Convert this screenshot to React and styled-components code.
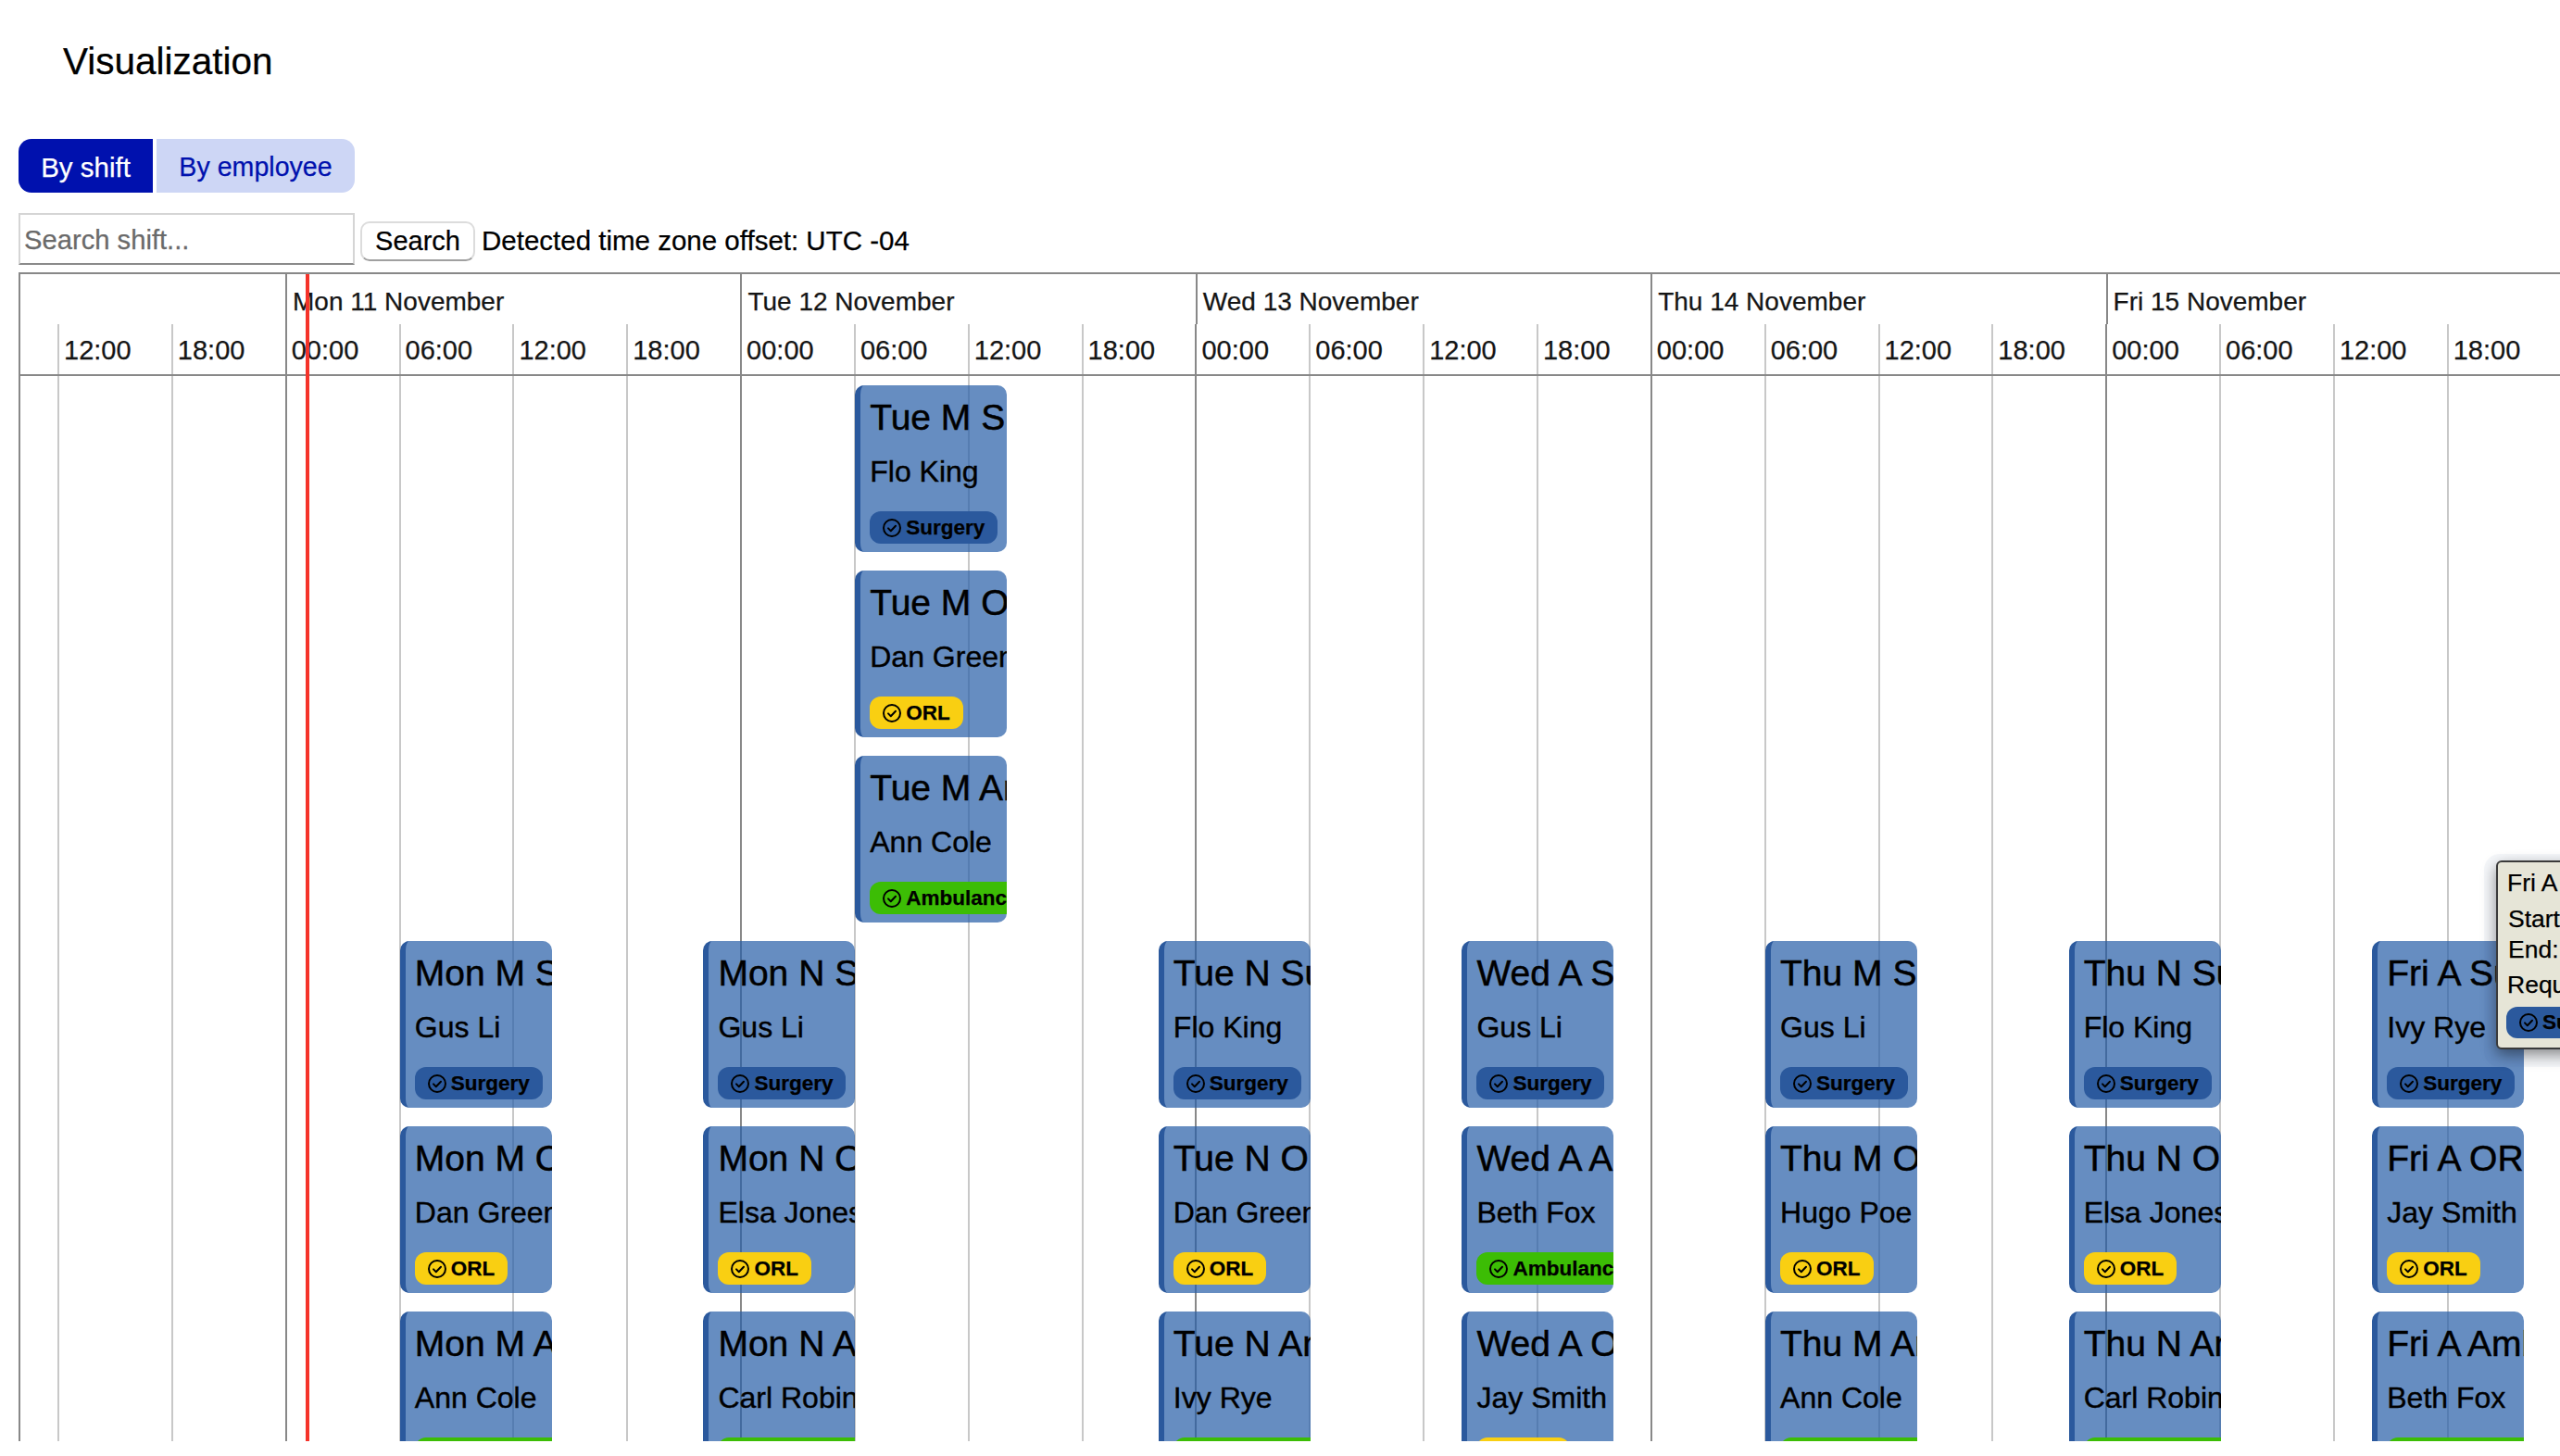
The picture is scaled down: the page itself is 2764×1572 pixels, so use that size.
import React from "react";
import styled, { createGlobalStyle } from "styled-components";

const HOUR = 20.475;
const FONT = '"Liberation Sans", Arial, sans-serif';

const GlobalStyle = createGlobalStyle`
  html, body { margin: 0; padding: 0; width: 2764px; height: 1572px; overflow: hidden; background: #fff; }
  body { font-family: ${FONT}; color: #151515; -webkit-text-stroke: 0.25px currentColor; }
  * { box-sizing: border-box; }
`;

const Page = styled.div`
  width: 2764px;
  height: 1556px;
  padding-left: 20px;
  display: flex;
  flex-direction: column;
  overflow: hidden;
`;
const Title = styled.h1`
  margin: 0;
  height: 150px;
  padding: 41px 0 0 48px;
  font-size: 40.5px;
  line-height: 50px;
  font-weight: 400;
  color: #000;
`;
const Toggle = styled.div`
  display: flex;
  gap: 4px;
  height: 58px;
`;
const ToggleButton = styled.button`
  border: 0;
  font: 400 ${(p) => (p.$active ? 29.5 : 28.6)}px ${FONT};
  padding: 3px 0 0;
  width: ${(p) => (p.$active ? 145 : 214)}px;
  background: ${(p) => (p.$active ? "#0011ae" : "#cdd6f5")};
  color: ${(p) => (p.$active ? "#fff" : "#0011ae")};
  border-radius: ${(p) => (p.$active ? "14px 0 0 14px" : "0 14px 14px 0")};
`;
const SearchRow = styled.div`
  display: flex;
  align-items: center;
  height: 56px;
  margin-top: 22px;
  font-size: 29.5px;
  color: #000;
`;
const SearchInput = styled.input`
  width: 363px;
  height: 56px;
  padding: 3px 4px 0;
  border: 2px solid #d5d5d5;
  border-bottom-color: #8a8a8a;
  font: 400 29.2px ${FONT};
  background: #fff;
  &::placeholder { color: #6a6a6a; opacity: 1; }
`;
const SearchButton = styled.button`
  margin: 4px 7px 0 6px;
  width: 124px;
  height: 43px;
  padding: 0;
  background: #fff;
  border: 2px solid #dcdcdc;
  border-bottom-color: #a0a0a0;
  border-radius: 10px;
  font: 400 29px ${FONT};
  color: #000;
`;
const OffsetText = styled.span`
  padding-top: 3px;
`;
const Timeline = styled.div`
  position: relative;
  flex: 1;
  min-height: 0;
  margin-top: 8px;
  border-left: 2px solid #888;
  border-top: 2px solid #888;
  overflow: hidden;
  display: flex;
  flex-direction: column;
`;
const DayRow = styled.div`
  display: flex;
  flex: none;
  height: 54px;
`;
const DayBlank = styled.div`
  flex: none;
  width: 286px;
`;
const DayCell = styled.div`
  flex: none;
  width: ${HOUR * 24}px;
  border-left: 2px solid #888;
  padding: 12px 0 0 6px;
  font-size: 28px;
  line-height: 36px;
  color: #151515;
`;
const HourRow = styled.div`
  display: flex;
  flex: none;
  height: 56px;
  border-bottom: 2px solid #888;
`;
const Blank = styled.div`
  flex: none;
  width: 40px;
`;
const HourCell = styled.div`
  flex: none;
  width: ${HOUR * 6}px;
  border-left: 2px solid ${(p) => (p.$major ? "#888" : "#c8c8c8")};
  padding: 10px 0 0 5px;
  font-size: 29px;
  line-height: 36px;
  color: #151515;
`;
const Body = styled.div`
  position: relative;
  flex: 1;
  min-height: 0;
`;
const GridLayer = styled.div`
  position: absolute;
  inset: 0;
  display: flex;
`;
const GridCell = styled.div`
  flex: none;
  width: ${HOUR * 6}px;
  border-left: 2px solid ${(p) => (p.$major ? "#888" : "#c8c8c8")};
`;
const NowLine = styled.div`
  position: absolute;
  left: 308px;
  top: 0;
  bottom: 0;
  width: 4px;
  background: #f5332a;
  z-index: 3;
`;
const Card = styled.div`
  position: absolute;
  width: 164px;
  height: 180px;
  background: rgba(40, 94, 167, 0.71);
  border-left: 6px solid #2b599d;
  border-radius: 10px;
  overflow: hidden;
  padding: 12px 0 0 10px;
  white-space: nowrap;
  color: #000;
`;
const CardTitle = styled.div`
  font-size: 39px;
  line-height: 46px;
  -webkit-text-stroke: 0.5px #000;
`;
const CardName = styled.div`
  margin-top: 12px;
  font-size: 32px;
  line-height: 46px;
  -webkit-text-stroke: 0.4px #000;
`;
const Badge = styled.div`
  display: inline-flex;
  align-items: center;
  gap: 5px;
  height: 35px;
  margin-top: 20px;
  padding: 0 14px;
  border-radius: 12px;
  font-size: 22.5px;
  font-weight: 700;
  background: ${(p) => p.$bg};
`;
const TipBadge = styled(Badge)`
  margin: 7px 0 0 -1px;
  height: 34px;
`;
const CheckIcon = styled.svg`
  width: 20px;
  height: 20px;
  flex: none;
`;
const Tooltip = styled.div`
  position: absolute;
  left: 2673px;
  top: 523px;
  width: 340px;
  height: 204px;
  z-index: 4;
  background: #e6e5d7;
  border: 2px solid #3a3a3a;
  border-radius: 6px;
  padding: 4px 10px;
  box-shadow: 0 6px 16px rgba(0, 0, 0, 0.45), 0 6px 0 13px rgba(60, 90, 160, 0.05);
  color: #000;
  font-size: 26.5px;
  white-space: nowrap;
`;
const TipTitle = styled.div`
  line-height: 36px;
`;
const TipTimes = styled.div`
  margin: 5px 0 5px 1px;
`;
const TipLine = styled.div`
  line-height: 33px;
`;

function Check() {
  return (
    <CheckIcon viewBox="0 0 20 20" fill="none" stroke="#000" strokeWidth="2">
      <circle cx="10" cy="10" r="9" />
      <path d="M6 10.4l2.8 2.8 5.2-5.4" strokeLinecap="round" strokeLinejoin="round" />
    </CheckIcon>
  );
}

const SKILL = {
  Surgery: "#2b599d",
  ORL: "#f9cf12",
  Ambulance: "#3cbd05",
};

const x0 = 286; // Mon 00:00, relative to the body
const days = ["Mon 11 November", "Tue 12 November", "Wed 13 November", "Thu 14 November", "Fri 15 November"];
const hours = ["00:00", "06:00", "12:00", "18:00"];

const shifts = [
  [30, 0, "Tue M Surgery", "Flo King", "Surgery"],
  [30, 1, "Tue M ORL", "Dan Green", "ORL"],
  [30, 2, "Tue M Ambulance", "Ann Cole", "Ambulance"],
  [6, 3, "Mon M Surgery", "Gus Li", "Surgery"],
  [6, 4, "Mon M ORL", "Dan Green", "ORL"],
  [6, 5, "Mon M Ambulance", "Ann Cole", "Ambulance"],
  [22, 3, "Mon N Surgery", "Gus Li", "Surgery"],
  [22, 4, "Mon N ORL", "Elsa Jones", "ORL"],
  [22, 5, "Mon N Ambulance", "Carl Robin", "Ambulance"],
  [46, 3, "Tue N Surgery", "Flo King", "Surgery"],
  [46, 4, "Tue N ORL", "Dan Green", "ORL"],
  [46, 5, "Tue N Ambulance", "Ivy Rye", "Ambulance"],
  [62, 3, "Wed A Surgery", "Gus Li", "Surgery"],
  [62, 4, "Wed A Ambulance", "Beth Fox", "Ambulance"],
  [62, 5, "Wed A ORL", "Jay Smith", "ORL"],
  [78, 3, "Thu M Surgery", "Gus Li", "Surgery"],
  [78, 4, "Thu M ORL", "Hugo Poe", "ORL"],
  [78, 5, "Thu M Ambulance", "Ann Cole", "Ambulance"],
  [94, 3, "Thu N Surgery", "Flo King", "Surgery"],
  [94, 4, "Thu N ORL", "Elsa Jones", "ORL"],
  [94, 5, "Thu N Ambulance", "Carl Robin", "Ambulance"],
  [110, 3, "Fri A Surgery", "Ivy Rye", "Surgery"],
  [110, 4, "Fri A ORL", "Jay Smith", "ORL"],
  [110, 5, "Fri A Ambulance", "Beth Fox", "Ambulance"],
];

const slots = [];
for (let d = 0; d < 5; d++) hours.forEach((h, i) => slots.push({ h, major: i === 0 }));
const leading = ["12:00", "18:00"];
const cols = [...leading.map((h) => ({ h, major: false })), ...slots];

export default function App() {
  return (
    <>
      <GlobalStyle />
      <Page>
        <Title>Visualization</Title>
        <Toggle>
          <ToggleButton $active>By shift</ToggleButton>
          <ToggleButton>By employee</ToggleButton>
        </Toggle>
        <SearchRow>
          <SearchInput placeholder="Search shift..." />
          <SearchButton>Search</SearchButton>
          <OffsetText>Detected time zone offset: UTC -04</OffsetText>
        </SearchRow>
        <Timeline>
          <DayRow>
            <DayBlank />
            {days.map((d) => (
              <DayCell key={d}>{d}</DayCell>
            ))}
          </DayRow>
          <HourRow>
            <Blank />
            {cols.map((c, i) => (
              <HourCell key={i} $major={c.major}>{c.h}</HourCell>
            ))}
          </HourRow>
          <Body>
            <GridLayer>
              <Blank />
              {cols.map((c, i) => (
                <GridCell key={i} $major={c.major} />
              ))}
            </GridLayer>
            {shifts.map(([hour, row, title, name, skill]) => (
              <Card key={title} style={{ left: x0 + 1 + hour * HOUR, top: 10 + row * 200 }}>
                <CardTitle>{title}</CardTitle>
                <CardName>{name}</CardName>
                <Badge $bg={SKILL[skill]}>
                  <Check />
                  {skill}
                </Badge>
              </Card>
            ))}
            <Tooltip>
              <TipTitle>Fri A Surgery</TipTitle>
              <TipTimes>
                <TipLine>Start: Fri 15 Nov</TipLine>
                <TipLine>End: Fri 15 Nov</TipLine>
              </TipTimes>
              <TipLine>Required skill:</TipLine>
              <TipBadge $bg={SKILL.Surgery}>
                <Check />
                Surgery
              </TipBadge>
            </Tooltip>
          </Body>
          <NowLine />
        </Timeline>
      </Page>
    </>
  );
}
